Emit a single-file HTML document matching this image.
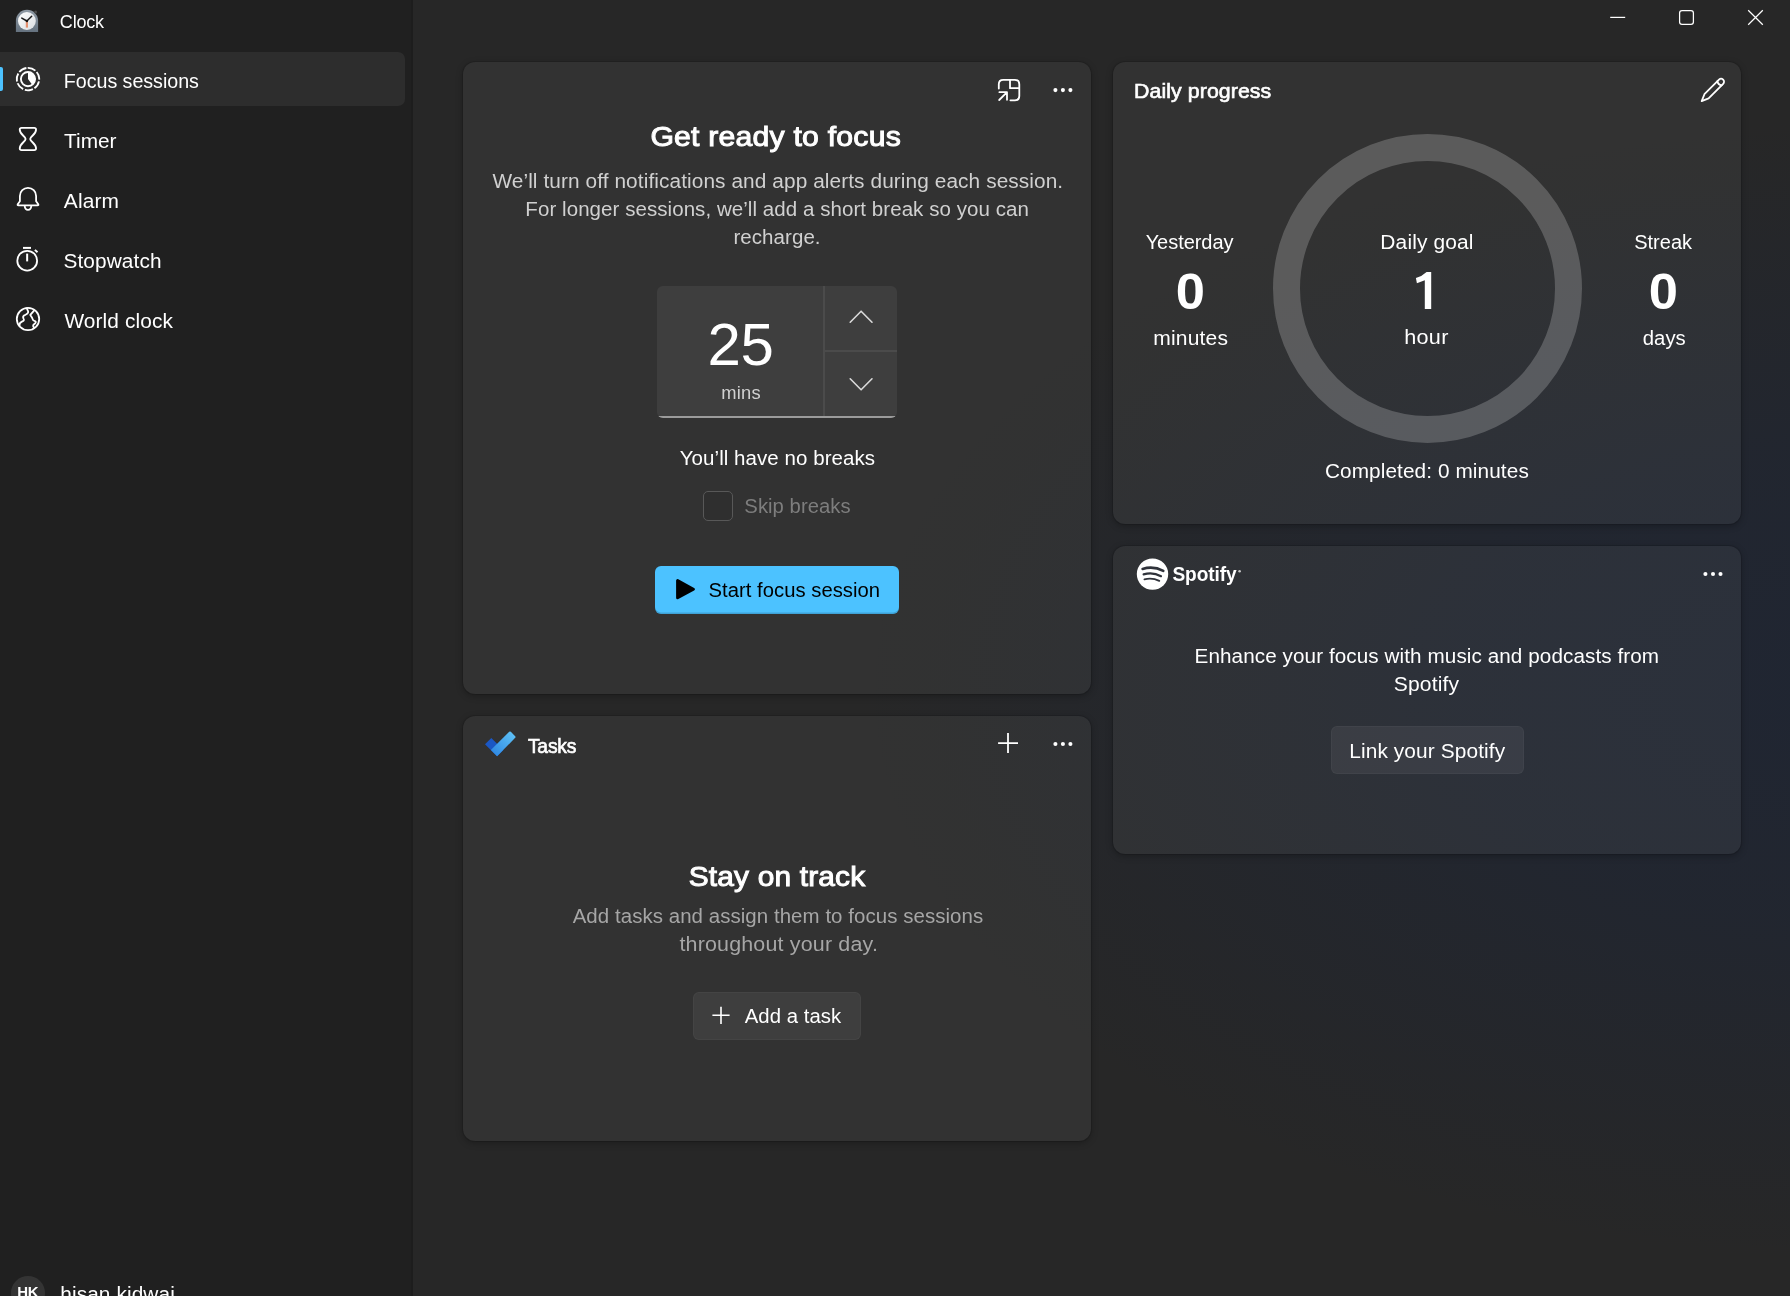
<!DOCTYPE html>
<html lang="en">
<head>
<meta charset="utf-8">
<title>Clock</title>
<style>
*{box-sizing:border-box;margin:0;padding:0}
html,body{width:1790px;height:1296px;overflow:hidden;background:#202020}
body{position:relative;font-family:"Liberation Sans",sans-serif;color:#fff}
.abs{position:absolute}
#side{left:0;top:0;width:412px;height:1296px;background:#202020}
#main{left:411px;top:0;width:1379px;height:1296px;background:#272727;border-left:2px solid #1d1d1d;overflow:hidden}
#glow{left:0;top:0;width:1379px;height:1296px;
 background:radial-gradient(ellipse 1000px 570px at 1440px 690px, rgba(24,36,62,0.48) 0%, rgba(24,36,62,0.37) 40%, rgba(24,36,62,0.19) 70%, rgba(24,36,62,0.06) 90%, rgba(24,36,62,0) 100%)}
.card{position:absolute;border-radius:12px;background:rgba(255,255,255,0.052);box-shadow:0 0 0 1px rgba(0,0,0,0.10),0 2px 7px rgba(0,0,0,0.28)}
.navsel{left:0;top:52px;width:405px;height:54px;background:#2d2d2d;border-radius:0 7px 7px 0}
.pill{left:0;top:67px;width:3px;height:24px;background:#4cc2ff;border-radius:0 2px 2px 0}
.t{position:absolute;left:0;top:0;white-space:nowrap;line-height:1;transform-origin:0 0}
.btn{position:absolute;border-radius:6px;background:rgba(255,255,255,0.062);box-shadow:inset 0 0 0 1px rgba(255,255,255,0.035)}
svg{position:absolute;left:0;top:0;overflow:visible}
</style>
</head>
<body>
<div id="side" class="abs"></div>
<div id="main" class="abs"><div id="glow" class="abs"></div></div>

<!-- nav selection -->
<div class="abs navsel"></div>
<div class="abs pill"></div>

<!-- cards -->
<div class="card" style="left:463px;top:62px;width:628px;height:632px"></div>
<div class="card" style="left:463px;top:716px;width:628px;height:425px"></div>
<div class="card" style="left:1113px;top:62px;width:628px;height:462px"></div>
<div class="card" style="left:1113px;top:546px;width:628px;height:308px"></div>

<!-- minute picker -->
<div class="abs" style="left:657px;top:286px;width:240px;height:132px;border-radius:6px;background:rgba(255,255,255,0.062);overflow:hidden">
  <div class="abs" style="left:166px;top:0;width:2px;height:132px;background:rgba(255,255,255,0.07)"></div>
  <div class="abs" style="left:168px;top:64px;width:72px;height:2px;background:rgba(255,255,255,0.07)"></div>
  <div class="abs" style="left:0;bottom:0;width:240px;height:1.6px;background:#9b9b9b"></div>
</div>

<!-- checkbox -->
<div class="abs" style="left:703px;top:491px;width:30px;height:30px;border-radius:5px;border:1.5px solid #585858;background:rgba(0,0,0,0.06)"></div>

<!-- start button -->
<div class="abs" style="left:655px;top:566px;width:244px;height:48px;border-radius:6px;background:#4cc2ff;box-shadow:inset 0 -1.5px 0 rgba(0,0,0,0.16)"></div>

<!-- secondary buttons -->
<div class="btn" style="left:693px;top:992px;width:168px;height:48px"></div>
<div class="btn" style="left:1331px;top:726px;width:193px;height:48px"></div>

<!-- avatar -->
<div class="abs" style="left:11px;top:1276px;width:34px;height:34px;border-radius:50%;background:#343434"></div>

<!-- all vector icons in one page-sized svg -->
<svg width="1790" height="1296" viewBox="0 0 1790 1296" fill="none" stroke-linecap="round" stroke-linejoin="round">
<defs>
 <linearGradient id="clkbody" x1="0" y1="0" x2="0" y2="1"><stop offset="0" stop-color="#8f9aa5"/><stop offset="1" stop-color="#65727f"/></linearGradient>
 <linearGradient id="clkface" x1="0" y1="0" x2="1" y2="1"><stop offset="0" stop-color="#ffffff"/><stop offset="1" stop-color="#d9dde1"/></linearGradient>
 <linearGradient id="todoL" x1="0" y1="1" x2="1" y2="0"><stop offset="0" stop-color="#2a82e0"/><stop offset="1" stop-color="#62c6f7"/></linearGradient>
</defs>

<!-- app icon -->
<g>
 <path d="M15.9 32.1V20.8a11.1 11.1 0 0 1 22.2 0V32.1Z" fill="url(#clkbody)"/>
 <circle cx="35.6" cy="12.1" r="1.5" fill="#4a4a4a"/>
 <circle cx="26.9" cy="21" r="8.9" fill="url(#clkface)"/>
 <path d="M26.9 21.4V27.6" stroke="#e58f6e" stroke-width="2.2" stroke-linecap="butt"/>
 <path d="M21.8 18.1L26.9 21L31.7 16.2" stroke="#1a1a1a" stroke-width="1.5"/>
 <circle cx="26.9" cy="21" r="1.2" fill="#111"/>
</g>

<!-- focus sessions icon -->
<g stroke="#fff" stroke-width="1.85" stroke-linecap="butt">
 <circle cx="28" cy="79.1" r="11.2" stroke-dasharray="8.25 1.803" stroke-dashoffset="-0.9" transform="rotate(-96 28 79.1)"/>
 <circle cx="28" cy="79.1" r="7.1"/>
 <path d="M28 79.1V72A7.1 7.1 0 0 1 32.17 84.84Z" fill="#fff" stroke="none"/>
</g>

<!-- timer (hourglass) -->
<path stroke="#fff" stroke-width="1.85" d="M21.6 127.85H34.2Q36.05 127.85 36.05 129.7C36.05 134.4 30.2 136.4 30.2 139C30.2 141.6 36.05 143.6 36.05 148.3Q36.05 150.15 34.2 150.15H21.6Q19.75 150.15 19.75 148.3C19.75 143.6 25.6 141.6 25.6 139C25.6 136.4 19.75 134.4 19.75 129.7Q19.75 127.85 21.6 127.85Z"/>

<!-- alarm (bell) -->
<g stroke="#fff" stroke-width="1.8">
 <path d="M19.9 201.2V195.9A8.1 8.1 0 0 1 36.1 195.9V201.2L38.3 204.3Q38.8 205.4 37.6 205.4H18.4Q17.2 205.4 17.7 204.3Z"/>
 <path d="M24.7 205.9Q25 209.9 28 209.9Q31 209.9 31.3 205.9"/>
</g>

<!-- stopwatch -->
<g stroke="#fff" stroke-width="1.8">
 <circle cx="27.2" cy="260.7" r="9.9"/>
 <path d="M23 247.9H31" stroke-width="2" stroke-linecap="butt"/>
 <path d="M27.15 253.6V261.4" stroke-width="2" stroke-linecap="butt"/>
 <path d="M34.9 249.9L37.5 252.3" stroke-width="1.9" stroke-linecap="butt"/>
</g>

<!-- world clock (globe) -->
<g stroke="#fff" stroke-width="1.8">
 <circle cx="28" cy="319" r="11.2"/>
 <path d="M26.8 308.4C27.2 310 28.6 311 28.1 312.6C27.6 314.4 25.4 314.6 24 315.6C22.6 316.6 23 317.8 23.6 318.9C24.4 320.2 23.8 320.8 21.9 321.6C19.9 322.5 19.2 323.6 19.5 325.6"/>
 <path d="M33.8 310.8L30.3 314.9C30.9 316.3 32 317.2 32.4 318.6C32.7 319.8 33 320.6 34.3 320.8C35.8 321 36.2 322 35.3 323.1C34.3 324.2 32.7 324.8 33.1 326.1C33.3 326.8 33.6 327.2 34 327.6"/>
</g>

<!-- window controls -->
<g stroke="#fff" stroke-width="1.25" stroke-linecap="butt">
 <path d="M1610.2 17.4H1625.2"/>
 <rect x="1679.6" y="10.6" width="13.8" height="13.8" rx="2.4"/>
 <path d="M1748.2 10.3L1762.8 24.7M1762.8 10.3L1748.2 24.7"/>
</g>

<!-- card A: compact overlay icon + more -->
<g stroke="#fff" stroke-width="1.8">
 <path d="M998.8 88.6V84.2Q998.8 79.8 1003.2 79.8H1014.9Q1019.3 79.8 1019.3 84.2V95.9Q1019.3 100.3 1014.9 100.3H1010.4"/>
 <path d="M1010 79.8V88.2H1019.3" stroke-linecap="butt"/>
 <path d="M999.2 100L1006.6 92.6M999.4 92.2H1007V99.8"/>
</g>
<g fill="#fff">
 <circle cx="1055.4" cy="90.1" r="2.05"/><circle cx="1062.9" cy="90.1" r="2.05"/><circle cx="1070.4" cy="90.1" r="2.05"/>
 <circle cx="1055.4" cy="744" r="2.05"/><circle cx="1062.9" cy="744" r="2.05"/><circle cx="1070.4" cy="744" r="2.05"/>
 <circle cx="1705.4" cy="574" r="2.05"/><circle cx="1713" cy="574" r="2.05"/><circle cx="1720.5" cy="574" r="2.05"/>
</g>

<!-- chevrons -->
<g stroke="#dadada" stroke-width="1.6">
 <path d="M850.2 322.2L861.1 311.2L872 322.2"/>
 <path d="M850.2 378.8L861.1 389.8L872 378.8"/>
</g>

<!-- play glyph -->
<path d="M677.6 580.6V597.8L693.4 589.2Z" fill="#000" stroke="#000" stroke-width="3"/>

<!-- To Do logo -->
<g>
 <path d="M485 744.2L491.3 737.9L503.4 750L497.1 756.3Z" fill="#1b57c4"/>
 <path d="M497.1 756.3L490.9 750.1L509.2 731.8Q510 731 510.8 731.8L515.2 736.2Q516 737 515.2 737.8Z" fill="url(#todoL)"/>
</g>

<!-- plus icons -->
<g stroke="#fff" stroke-width="1.8" stroke-linecap="butt">
 <path d="M998.1 743.1H1018M1008 733.1V753"/>
 <path d="M712.4 1015.3H729.6M721 1006.7V1023.9" stroke-width="1.6"/>
</g>

<!-- progress ring -->
<circle cx="1427.5" cy="288.4" r="141" stroke="rgba(255,255,255,0.205)" stroke-width="27"/>

<!-- daily goal numeral -->
<path d="M1431.2 271.9V309.1H1424.8V280.3L1416.9 283.2L1415.9 278.1Q1422 276.2 1426.6 271.9Z" fill="#fff"/>

<!-- edit pencil -->
<g stroke="#fff" stroke-width="1.8" transform="translate(1701.7 101.1) rotate(-45)">
 <path d="M0 0L6.8 -2.95H27.4A2.95 2.95 0 0 1 27.4 2.95H6.8Z"/>
 <path d="M25.2 -2.95Q22.9 0 25.2 2.95"/>
</g>

<!-- Spotify logo -->
<g>
 <circle cx="1152.5" cy="574.1" r="15.7" fill="#fff"/>
 <g stroke="#2f323a" fill="none">
  <path d="M1142.6 568.9Q1153.4 565.6 1163.3 570.9" stroke-width="2.6"/>
  <path d="M1143.6 574.4Q1152.8 571.8 1161 576.2" stroke-width="2.15"/>
  <path d="M1144.4 579.3Q1152.2 577.3 1159.3 580.9" stroke-width="1.8"/>
 </g>
 <circle cx="1239.6" cy="571.3" r="1.3" fill="#c9c9c9"/>
</g>
</svg>

<div id="txt" style="position:absolute;left:0;top:0;width:1790px;height:1296px;will-change:transform">
<div class="t" style="font-size:18px;color:#ffffff;letter-spacing:-0.179px;transform:translate(59.83px,13.00px)">Clock</div>
<div class="t" style="font-size:20px;color:#ffffff;letter-spacing:-0.038px;transform:translate(63.84px,71.00px) scaleX(0.9831)">Focus sessions</div>
<div class="t" style="font-size:20px;color:#ffffff;letter-spacing:0.013px;transform:translate(64.05px,131.00px) scaleX(1.0416)">Timer</div>
<div class="t" style="font-size:20px;color:#ffffff;letter-spacing:0.148px;transform:translate(63.79px,191.00px) scaleX(1.0453)">Alarm</div>
<div class="t" style="font-size:20px;color:#ffffff;letter-spacing:0.110px;transform:translate(63.44px,251.00px) scaleX(1.0400)">Stopwatch</div>
<div class="t" style="font-size:20px;color:#ffffff;letter-spacing:0.117px;transform:translate(64.39px,311.00px) scaleX(1.0428)">World clock</div>
<div class="t" style="font-size:15px;color:#ffffff;font-weight:700;letter-spacing:-0.138px;transform:translate(17.15px,1284.00px)">HK</div>
<div class="t" style="font-size:20px;color:#ffffff;letter-spacing:0.086px;transform:translate(60.25px,1284.00px) scaleX(1.0420)">hisan kidwai</div>
<div class="t" style="font-size:28.5px;color:#ffffff;letter-spacing:0.205px;-webkit-text-stroke:1px #fff;transform:translate(650.38px,122.00px) scaleX(1.0592)">Get ready to focus</div>
<div class="t" style="font-size:20px;color:#d0d0d0;letter-spacing:0.086px;transform:translate(492.39px,171.00px) scaleX(1.0409)">We’ll turn off notifications and app alerts during each session.</div>
<div class="t" style="font-size:20px;color:#d0d0d0;letter-spacing:0.052px;transform:translate(525.37px,199.00px) scaleX(1.0258)">For longer sessions, we’ll add a short break so you can</div>
<div class="t" style="font-size:20px;color:#d0d0d0;letter-spacing:0.064px;transform:translate(733.40px,227.00px) scaleX(1.0255)">recharge.</div>
<div class="t" style="font-size:60px;color:#ffffff;letter-spacing:-0.265px;transform:translate(707.51px,315.00px)">25</div>
<div class="t" style="font-size:17.5px;color:#d0d0d0;letter-spacing:0.169px;transform:translate(721.36px,385.00px) scaleX(1.0491)">mins</div>
<div class="t" style="font-size:20px;color:#ffffff;letter-spacing:0.053px;transform:translate(679.76px,448.00px) scaleX(1.0252)">You’ll have no breaks</div>
<div class="t" style="font-size:20px;color:#7d7d7d;letter-spacing:0.039px;transform:translate(744.36px,496.00px) scaleX(1.0127)">Skip breaks</div>
<div class="t" style="font-size:20px;color:#000000;letter-spacing:0.037px;transform:translate(708.43px,580.00px) scaleX(1.0120)">Start focus session</div>
<div class="t" style="font-size:20.5px;color:#ffffff;letter-spacing:-0.191px;-webkit-text-stroke:0.65px #fff;transform:translate(527.88px,736.00px) scaleX(0.9410)">Tasks</div>
<div class="t" style="font-size:28.5px;color:#ffffff;letter-spacing:0.169px;-webkit-text-stroke:1px #fff;transform:translate(688.73px,862.00px) scaleX(1.0477)">Stay on track</div>
<div class="t" style="font-size:20px;color:#a6a6a6;letter-spacing:0.056px;transform:translate(572.67px,906.00px) scaleX(1.0225)">Add tasks and assign them to focus sessions</div>
<div class="t" style="font-size:20px;color:#a6a6a6;letter-spacing:0.158px;transform:translate(679.42px,934.00px) scaleX(1.0727)">throughout your day.</div>
<div class="t" style="font-size:20px;color:#ffffff;letter-spacing:0.052px;transform:translate(744.69px,1006.00px) scaleX(1.0169)">Add a task</div>
<div class="t" style="font-size:20.5px;color:#ffffff;letter-spacing:0.079px;-webkit-text-stroke:0.65px #fff;transform:translate(1134.11px,81.00px) scaleX(1.0383)">Daily progress</div>
<div class="t" style="font-size:20px;color:#ffffff;letter-spacing:-0.040px;transform:translate(1145.63px,232.00px)">Yesterday</div>
<div class="t" style="font-size:50px;color:#ffffff;font-weight:700;transform:translate(1175.80px,266.99px) scaleX(1.0500)">0</div>
<div class="t" style="font-size:20px;color:#ffffff;letter-spacing:0.151px;transform:translate(1153.33px,328.00px) scaleX(1.0519)">minutes</div>
<div class="t" style="font-size:20px;color:#ffffff;letter-spacing:0.145px;transform:translate(1380.36px,232.00px) scaleX(1.0452)">Daily goal</div>
<div class="t" style="font-size:20px;color:#ffffff;letter-spacing:0.292px;transform:translate(1404.20px,327.00px) scaleX(1.0807)">hour</div>
<div class="t" style="font-size:20px;color:#ffffff;letter-spacing:0.027px;transform:translate(1634.14px,232.00px)">Streak</div>
<div class="t" style="font-size:50px;color:#ffffff;font-weight:700;transform:translate(1648.83px,266.99px) scaleX(1.0500)">0</div>
<div class="t" style="font-size:20px;color:#ffffff;letter-spacing:0.069px;transform:translate(1642.67px,328.00px) scaleX(1.0148)">days</div>
<div class="t" style="font-size:20px;color:#ffffff;letter-spacing:0.095px;transform:translate(1324.89px,461.00px) scaleX(1.0384)">Completed: 0 minutes</div>
<div class="t" style="font-size:19.5px;color:#ffffff;font-weight:700;letter-spacing:-0.080px;transform:translate(1172.45px,565.00px) scaleX(0.9794)">Spotify</div>
<div class="t" style="font-size:20px;color:#ffffff;letter-spacing:0.078px;transform:translate(1194.60px,646.00px) scaleX(1.0336)">Enhance your focus with music and podcasts from</div>
<div class="t" style="font-size:20px;color:#ffffff;letter-spacing:0.119px;transform:translate(1393.86px,674.00px) scaleX(1.0526)">Spotify</div>
<div class="t" style="font-size:20px;color:#ffffff;letter-spacing:0.103px;transform:translate(1349.24px,741.00px) scaleX(1.0427)">Link your Spotify</div>
</div>
</body>
</html>
